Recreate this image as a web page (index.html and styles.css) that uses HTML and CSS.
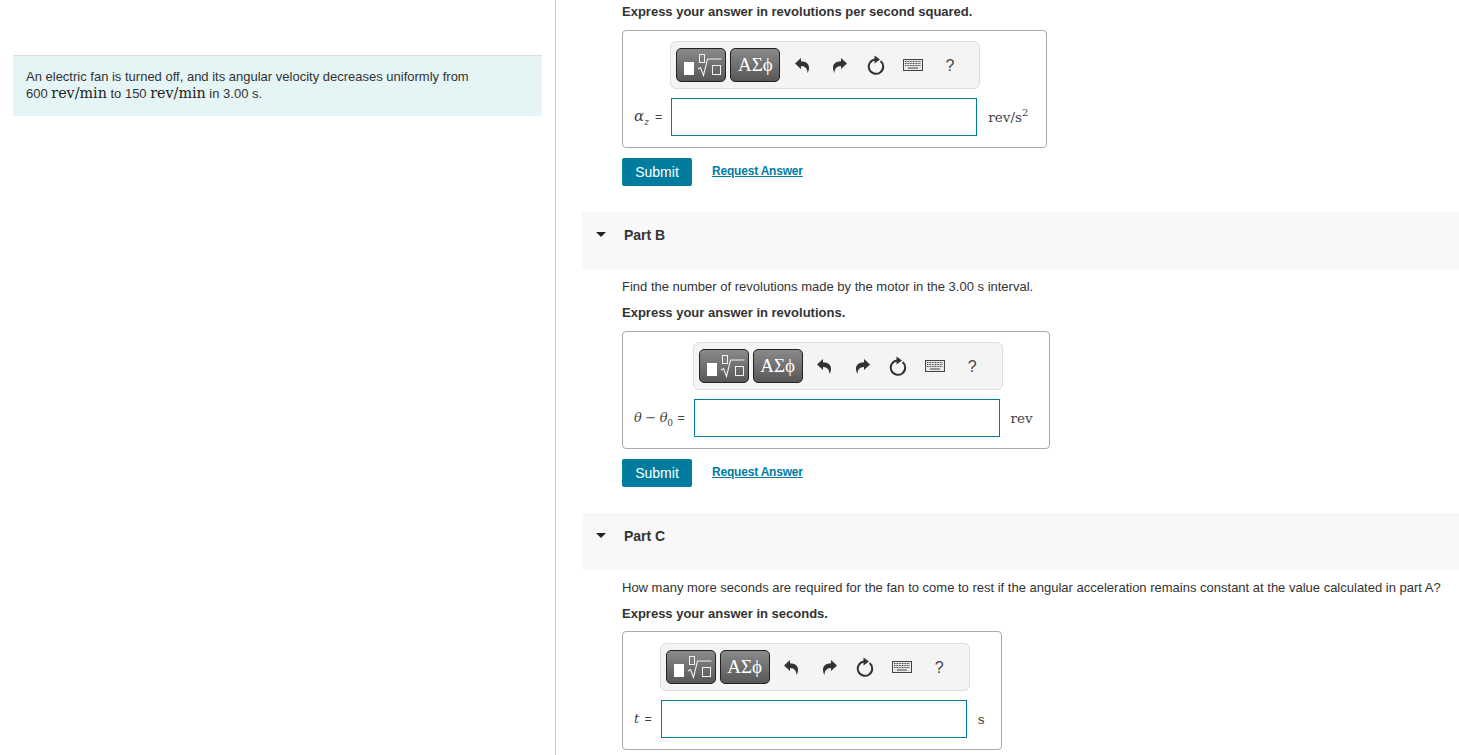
FILE: index.html
```html
<!DOCTYPE html>
<html lang="en">
<head>
  <meta charset="UTF-8" />
  <title>Part B and C</title>
  <link rel="stylesheet" href="styles.css">
</head>
<body>
  <svg class="defs" width="0" height="0">
    <defs>
      <symbol id="i-templates" viewBox="0 0 50 34">
        <rect x="8" y="14" width="10" height="13" fill="#fff" />
        <rect x="23.500" y="6.500" width="5" height="8" fill="none" stroke="#f2f2f2" />
        <path d="M22 21l2.500 -1.500 3 8 4 -16.500h14" fill="none" stroke="#f2f2f2" stroke-width="1.100" />
        <rect x="36.500" y="17.500" width="8" height="9" fill="none" stroke="#f2f2f2" />
      </symbol>
      <symbol id="i-undo" viewBox="0 0 14 15">
        <path d="M0 5.500L6 0V3.200C11 3.200 14 6 14 9.500C14 11.500 13.500 13.500 12.500 15C12.500 11 10.500 8 6 8V11Z" fill="#333" />
      </symbol>
      <symbol id="i-redo" viewBox="0 0 14 15">
        <path d="M14 5.500L8 0V3.200C3 3.200 0 6 0 9.500C0 11.500 .5 13.500 1.500 15C1.500 11 3.500 8 8 8V11Z" fill="#333" />
      </symbol>
      <symbol id="i-reset" viewBox="0 0 18 20">
        <path d="M13.600 6.100A7.200 7.200 0 1 1 8 4.500" fill="none" stroke="#333" stroke-width="2" />
        <path d="M7.500 .5V8.500L13 4.500Z" fill="#333" />
      </symbol>
      <symbol id="i-keyboard" viewBox="0 0 20 12">
        <rect x=".5" y=".5" width="19" height="11" fill="#e8e8e8" stroke="#444" />
        <path d="M2 2.500h16M2 4.500h16M2 6.500h16" stroke="#444" stroke-dasharray="1 .6" />
        <path d="M5 9h10" stroke="#444" />
      </symbol>
    </defs>
  </svg>

  <div class="page">
    <div class="left">
      <div class="intro">
        An electric fan is turned off, and its angular velocity decreases uniformly from<br>
        600 <span class="math">rev/min</span> to 150 <span class="math">rev/min</span> in 3.00 s.
      </div>
    </div>

    <div class="right">
      <div class="part-body first">
        <p class="ask"><b>Express your answer in revolutions per second squared.</b></p>
        <div class="answer-box">
          <div class="toolbar">
            <span class="tool-btn"><svg width="50" height="34"><use href="#i-templates" /></svg></span>
            <span class="tool-btn greek">ΑΣϕ</span>
            <span class="tool-icon"><svg width="14" height="15"><use href="#i-undo" /></svg></span>
            <span class="tool-icon shift"><svg width="14" height="15"><use href="#i-redo" /></svg></span>
            <span class="tool-icon"><svg width="18" height="20"><use href="#i-reset" /></svg></span>
            <span class="tool-icon"><svg width="20" height="12"><use href="#i-keyboard" /></svg></span>
            <span class="tool-icon help">?</span>
          </div>
          <span class="label"><i class="alpha">α<sub>z</sub></i> <span class="eq">=</span></span>
          <input class="answer" type="text">
          <span class="unit">rev/s<sup>2</sup></span>
        </div>
        <div class="actions">
          <button class="submit">Submit</button>
          <a class="request" href="#">Request Answer</a>
        </div>
      </div>

      <div class="part-head"><span class="caret"></span>Part B</div>
      <div class="part-body">
        <p class="ask">Find the number of revolutions made by the motor in the 3.00 s interval.</p>
        <p class="ask"><b>Express your answer in revolutions.</b></p>
        <div class="answer-box">
          <div class="toolbar">
            <span class="tool-btn"><svg width="50" height="34"><use href="#i-templates" /></svg></span>
            <span class="tool-btn greek">ΑΣϕ</span>
            <span class="tool-icon"><svg width="14" height="15"><use href="#i-undo" /></svg></span>
            <span class="tool-icon shift"><svg width="14" height="15"><use href="#i-redo" /></svg></span>
            <span class="tool-icon"><svg width="18" height="20"><use href="#i-reset" /></svg></span>
            <span class="tool-icon"><svg width="20" height="12"><use href="#i-keyboard" /></svg></span>
            <span class="tool-icon help">?</span>
          </div>
          <span class="label tight"><i>θ</i> − <i>θ</i><sub>0</sub> <span class="eq">=</span></span>
          <input class="answer" type="text">
          <span class="unit">rev</span>
        </div>
        <div class="actions">
          <button class="submit">Submit</button>
          <a class="request" href="#">Request Answer</a>
        </div>
      </div>

      <div class="part-head"><span class="caret"></span>Part C</div>
      <div class="part-body last">
        <p class="ask">How many more seconds are required for the fan to come to rest if the angular acceleration remains constant at the value calculated in part A?</p>
        <p class="ask"><b>Express your answer in seconds.</b></p>
        <div class="answer-box">
          <div class="toolbar">
            <span class="tool-btn"><svg width="50" height="34"><use href="#i-templates" /></svg></span>
            <span class="tool-btn greek">ΑΣϕ</span>
            <span class="tool-icon"><svg width="14" height="15"><use href="#i-undo" /></svg></span>
            <span class="tool-icon shift"><svg width="14" height="15"><use href="#i-redo" /></svg></span>
            <span class="tool-icon"><svg width="18" height="20"><use href="#i-reset" /></svg></span>
            <span class="tool-icon"><svg width="20" height="12"><use href="#i-keyboard" /></svg></span>
            <span class="tool-icon help">?</span>
          </div>
          <span class="label"><i>t</i> <span class="eq">=</span></span>
          <input class="answer" type="text">
          <span class="unit">s</span>
        </div>
      </div>
    </div>
  </div>
</body>
</html>
```

FILE: styles.css
```css
* {
  box-sizing: border-box;
}

html, body {
  margin: 0;
  height: 100%;
  overflow: hidden;
}

body {
  background: #fff;
  color: #333;
  font-family: 'Liberation Sans', Arial, sans-serif;
  font-size: 13px;
  line-height: 17px;
}

.defs {
  position: absolute;
}

.page {
  display: flex;
  height: 755px;
}

.left {
  flex: 0 0 556px;
  padding: 55px 13px 0;
  border-right: 1px solid #c8c8c8;
}

.intro {
  height: 61px;
  padding: 12px 13px 0;
  background: #e5f5f6;
  border-top: 1px solid #d8e0e4;
}

.math {
  color: #222;
  font-family: 'DejaVu Serif', serif;
  font-size: 14.3px;
}

.right {
  flex: 1;
  min-width: 0;
  padding: 3px 0 0 26px;
}

.part-body {
  padding: 9px 0 26px 40px;
}

.part-body.first {
  padding-top: 0;
}

.part-body.last {
  padding-bottom: 0;
}

.part-body.last .answer-box {
  margin-top: 0;
  padding-top: 11px;
}

.ask {
  margin: 0 0 9px;
  white-space: nowrap;
}

.part-head {
  display: flex;
  align-items: center;
  height: 57px;
  padding: 0 0 11px 14px;
  background: #f8f8f8;
  font-size: 14px;
  font-weight: bold;
}

.caret {
  width: 0;
  height: 0;
  margin: -2px 18px 0 0;
  border-left: 5.5px solid transparent;
  border-right: 5.5px solid transparent;
  border-top: 5.5px solid #222;
}

.answer-box {
  display: inline-grid;
  grid-template-columns: auto 306px auto;
  align-items: center;
  margin-top: 1px;
  padding: 10px 16px 11px 11px;
  background: #fff;
  border: 1px solid #aaa;
  border-radius: 4px;
  vertical-align: top;
}

.toolbar {
  grid-column: 2 / 4;
  display: flex;
  align-items: flex-start;
  width: 310px;
  height: 48px;
  margin: 0 0 9px -1px;
  padding: 6px 0 0 5px;
  background: #f4f4f4;
  border: 1px solid #ddd;
  border-radius: 6px;
}

.tool-btn {
  display: flex;
  align-items: center;
  justify-content: center;
  width: 50px;
  height: 34px;
  margin-right: 4px;
  background: linear-gradient(#8a8a8a, #575757);
  border: 1px solid #222;
  border-radius: 5px;
  overflow: hidden;
}

.tool-btn svg {
  flex: none;
}

.greek {
  margin-right: 3px;
  padding-bottom: 2px;
  color: #fff;
  font-family: 'Liberation Serif', serif;
  font-size: 19px;
}

.tool-icon {
  display: flex;
  align-items: center;
  justify-content: center;
  width: 37px;
  height: 34px;
}

.tool-icon.shift {
  padding-left: 3px;
}

.help {
  color: #444;
  font-size: 16px;
}

.label {
  padding-right: 9px;
  font-family: 'DejaVu Serif', serif;
  font-size: 13px;
  color: #444;
  white-space: nowrap;
}

.label .eq {
  margin-left: 1px;
  font-family: 'Liberation Sans', Arial, sans-serif;
  font-size: 12.5px;
}

.label.tight {
  letter-spacing: -0.3px;
}

.alpha {
  margin-right: 1px;
  font-size: 15px;
}

.label sub {
  font-size: 9px;
  line-height: 0;
}

.answer {
  width: 306px;
  height: 38px;
  padding: 0 6px;
  background: #fff;
  border: 1px solid #007c9f;
  border-radius: 0;
  outline: none;
}

.unit {
  padding-left: 11px;
  font-family: 'DejaVu Serif', serif;
  font-size: 13.5px;
  color: #444;
  white-space: nowrap;
}

.unit sup {
  margin-right: 2px;
  font-size: 10px;
  line-height: 0;
}

.actions {
  display: flex;
  align-items: flex-start;
  gap: 20px;
  margin-top: 10px;
}

.submit {
  width: 70px;
  height: 28px;
  padding: 0;
  background: #007c9f;
  color: #fff;
  border: none;
  border-radius: 2px;
  font-family: 'Liberation Sans', Arial, sans-serif;
  font-size: 14px;
}

.request {
  color: #007c9f;
  font-size: 12px;
  font-weight: bold;
  letter-spacing: -0.2px;
  line-height: 26px;
}
```
